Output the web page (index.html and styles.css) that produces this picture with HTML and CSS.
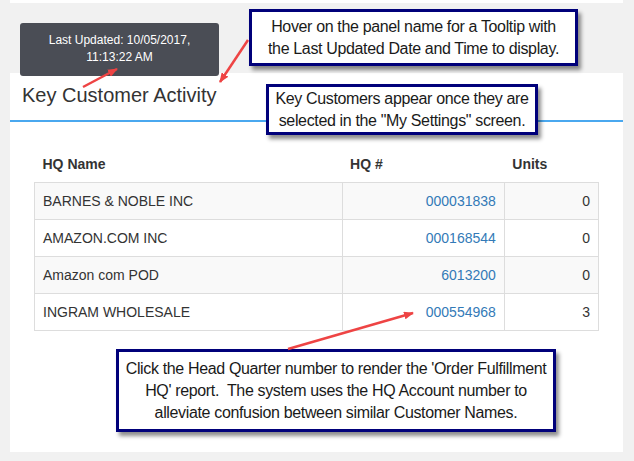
FILE: index.html
```html
<!DOCTYPE html>
<html lang="en">
<head>
    <meta charset="UTF-8">
    <meta name="viewport" content="width=device-width, initial-scale=1.0">
    <title>Key Customer Activity</title>
    <link rel="stylesheet" href="styles.css">
</head>
<body>
    <div class="page">
        <div class="prev-panel"></div>

        <div class="panel">
            <div class="panel-heading">
                <h3 class="panel-title">Key Customer Activity</h3>
            </div>
            <div class="panel-body">
                <table class="kc-table">
                    <thead>
                        <tr>
                            <th class="col-name">HQ Name</th>
                            <th class="col-hq">HQ #</th>
                            <th class="col-units">Units</th>
                        </tr>
                    </thead>
                    <tbody>
                        <tr>
                            <td>BARNES &amp; NOBLE INC</td>
                            <td class="num"><a href="#">000031838</a></td>
                            <td class="num">0</td>
                        </tr>
                        <tr>
                            <td>AMAZON.COM INC</td>
                            <td class="num"><a href="#">000168544</a></td>
                            <td class="num">0</td>
                        </tr>
                        <tr>
                            <td>Amazon com POD</td>
                            <td class="num"><a href="#">6013200</a></td>
                            <td class="num">0</td>
                        </tr>
                        <tr>
                            <td>INGRAM WHOLESALE</td>
                            <td class="num"><a href="#">000554968</a></td>
                            <td class="num">3</td>
                        </tr>
                    </tbody>
                </table>
            </div>
        </div>

        <!-- tooltip shown on hover of the panel title -->
        <div class="tooltip">Last Updated: 10/05/2017,<br>11:13:22 AM</div>

        <!-- annotation callouts -->
        <div class="callout callout-hover">Hover on the panel name for a Tooltip with<br>the Last Updated Date and Time to display.</div>
        <div class="callout callout-settings">Key Customers appear once they are<br>selected in the "My Settings" screen.</div>
        <div class="callout callout-click">Click the Head Quarter number to render the 'Order Fulfillment<br>HQ' report.&nbsp; The system uses the HQ Account number to<br>alleviate confusion between similar Customer Names.</div>

        <svg class="arrows" width="634" height="461" viewBox="0 0 634 461">
            <defs>
                <marker id="head" markerWidth="10" markerHeight="8" refX="9" refY="4" orient="auto" markerUnits="userSpaceOnUse">
                    <path d="M0,0 L10,4 L0,8 Z" fill="#ee4444"/>
                </marker>
            </defs>
            <line x1="248" y1="40" x2="220" y2="82" stroke="#ee4444" stroke-width="2.5" marker-end="url(#head)"/>
            <line x1="83" y1="87" x2="117" y2="69" stroke="#ee4444" stroke-width="2.5" marker-end="url(#head)"/>
            <line x1="288" y1="349" x2="413" y2="313" stroke="#ee4444" stroke-width="2.5" marker-end="url(#head)"/>
        </svg>
    </div>
</body>
</html>
```

FILE: styles.css
```css
body {
    margin: 0;
    padding: 0;
    background-color: #f1f1f1;
    font-family: "Liberation Sans", Arial, sans-serif;
    font-size: 14px;
    color: #333;
}
.page {
    position: relative;
    width: 634px;
    height: 461px;
    overflow: hidden;
}
.prev-panel {
    margin: 0 11px 0 10px;
    height: 3px;
    background: #fff;
}
.panel {
    margin: 70px 11px 0 10px;
    background: #fff;
    height: 379px;
}
.panel-heading {
    padding: 9px 12px 11px 12px;
    border-bottom: 2px solid #4aa8ef;
}
.panel-title {
    margin: 0;
    font-size: 20px;
    font-weight: normal;
    line-height: 27px;
    color: #333;
}
.panel-body {
    padding: 24px 24px 0 24px;
}
.kc-table {
    width: 565px;
    table-layout: fixed;
    border-collapse: collapse;
    border-spacing: 0;
}
.kc-table th,
.kc-table td {
    padding: 8px 8px 8px 8px;
    line-height: 20px;
    text-align: left;
}
.kc-table th {
    font-weight: bold;
}
.kc-table td {
    border: 1px solid #ddd;
}
.kc-table tbody tr:nth-child(odd) {
    background-color: #f9f9f9;
}
.kc-table td.num {
    text-align: right;
}
.col-name {
    width: 291px;
}
.col-hq {
    width: 146px;
}
.col-units {
    width: 78px;
}
.kc-table a {
    color: #337ab7;
    text-decoration: none;
}
.tooltip {
    position: absolute;
    left: 20px;
    top: 23px;
    width: 199px;
    height: 53px;
    box-sizing: border-box;
    padding: 9px 4px 0 4px;
    background: #4a4d55;
    border-radius: 3px;
    color: #fff;
    font-size: 12px;
    line-height: 17px;
    text-align: center;
}
.callout {
    position: absolute;
    box-sizing: border-box;
    background: #fff;
    border: 3px solid #00007a;
    box-shadow: 3px 4px 4px rgba(0,0,0,0.45);
    color: #1a1a1a;
    font-size: 16px;
    letter-spacing: -0.35px;
    line-height: 22px;
    text-align: center;
    white-space: nowrap;
}
.callout-hover {
    left: 249px;
    top: 9px;
    width: 329px;
    height: 57px;
    padding-top: 4px;
}
.callout-settings {
    left: 266px;
    top: 84px;
    width: 272px;
    height: 51px;
    padding-top: 1px;
}
.callout-click {
    left: 116px;
    top: 349px;
    width: 440px;
    height: 83px;
    padding-top: 6px;
}
.arrows {
    position: absolute;
    left: 0;
    top: 0;
    pointer-events: none;
}
```
